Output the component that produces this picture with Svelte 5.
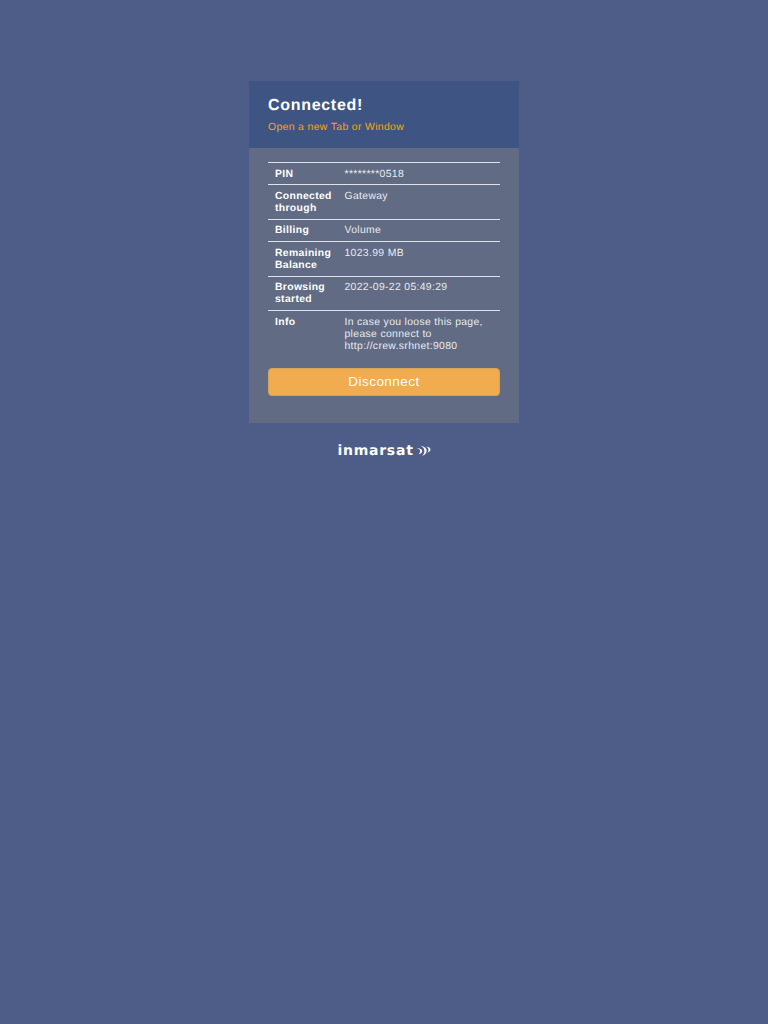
<script>
  const rows = [
    { label: "PIN", value: ["********0518"] },
    { label: "Connected through", value: ["Gateway"] },
    { label: "Billing", value: ["Volume"] },
    { label: "Remaining Balance", value: ["1023.99 MB"] },
    { label: "Browsing started", value: ["2022-09-22 05:49:29"] },
    { label: "Info", value: ["In case you loose this page,", "please connect to", "http://crew.srhnet:9080"] },
  ];
</script>

<div class="page">
  <div class="card">
    <div class="head">
      <h1>Connected!</h1>
      <p>Open a new Tab or Window</p>
    </div>
    <div class="body">
      <div class="rows">
        {#each rows as row}
          <div class="row">
            <div class="label">{row.label}</div>
            <div class="value">
              {#each row.value as line}
                <div>{line}</div>
              {/each}
            </div>
          </div>
        {/each}
      </div>
      <button type="button">Disconnect</button>
    </div>
  </div>

  <div class="logo">
    <span>inmarsat</span>
    <svg width="15" height="12" viewBox="0 0 15 12" aria-hidden="true">
      <path d="M0.500 3 C2.800 3.500 4.200 4.600 4.200 6.200 C4.200 7.400 3.600 8.300 2.400 9.200 C5 8.600 6.200 7.500 6.200 5.900 C6.200 4.300 4 3.200 0.500 3Z" />
      <path d="M4.600 0.800 C7.200 2 8.400 3.800 8.400 6 C8.400 8 7.500 9.700 5.800 11 C9 10 10.600 8.200 10.600 5.800 C10.600 3.300 8.300 1.300 4.600 0.800Z" />
      <path d="M10 1.600 C11.700 2.400 12.500 3.500 12.500 5 C12.500 6 12.100 6.900 11.400 7.700 C13.300 7 14.500 6 14.500 4.600 C14.500 3.100 12.800 2 10 1.600Z" />
    </svg>
  </div>
</div>

<style>
  :global(body) {
    margin: 0;
    background: #4d5d87;
  }

  .page {
    min-height: 1024px;
    padding-top: 81px;
    box-sizing: border-box;
    display: flex;
    flex-direction: column;
    align-items: center;
    font-family: "Liberation Sans", Arial, sans-serif;
    color: #fff;
    text-rendering: geometricPrecision;
  }

  .card {
    width: 270px;
  }

  .head {
    height: 67px;
    box-sizing: border-box;
    padding: 16px 19px 0;
    background: #3e5482;
  }

  h1 {
    margin: 0;
    font-size: 16px;
    line-height: 17px;
    letter-spacing: 0.7px;
    font-weight: bold;
  }

  .head p {
    margin: 7.500px 0 0;
    font-size: 10.400px;
    line-height: 12px;
    letter-spacing: 0.36px;
    color: #f8a512;
  }

  .body {
    height: 275px;
    box-sizing: border-box;
    padding: 14px 19px 0;
    background: #616b83;
  }

  .rows {
    font-size: 10.400px;
    line-height: 12px;
    letter-spacing: 0.34px;
  }

  .row {
    display: grid;
    grid-template-columns: 69.500px 1fr;
    padding: 5.500px 7px 3.950px;
    border-top: 1px solid #dfe2ea;
  }

  .label {
    font-weight: bold;
    padding-right: 10px;
  }

  .value {
    color: #e9ebf0;
  }

  button {
    display: block;
    width: 232px;
    height: 28px;
    margin-top: 11px;
    padding: 0 0 1px;
    border: 1px solid #d8a45c;
    border-radius: 4px;
    background: #f0ac4e;
    color: #fff;
    font-family: inherit;
    font-size: 13.500px;
    letter-spacing: 0.45px;
  }

  .logo {
    display: flex;
    align-items: center;
    gap: 2px;
    margin-top: 20px;
    height: 16px;
  }

  .logo span {
    font-family: "DejaVu Sans", sans-serif;
    font-size: 14px;
    font-weight: bold;
    letter-spacing: 0.75px;
  }

  .logo svg {
    fill: #fff;
  }
</style>
